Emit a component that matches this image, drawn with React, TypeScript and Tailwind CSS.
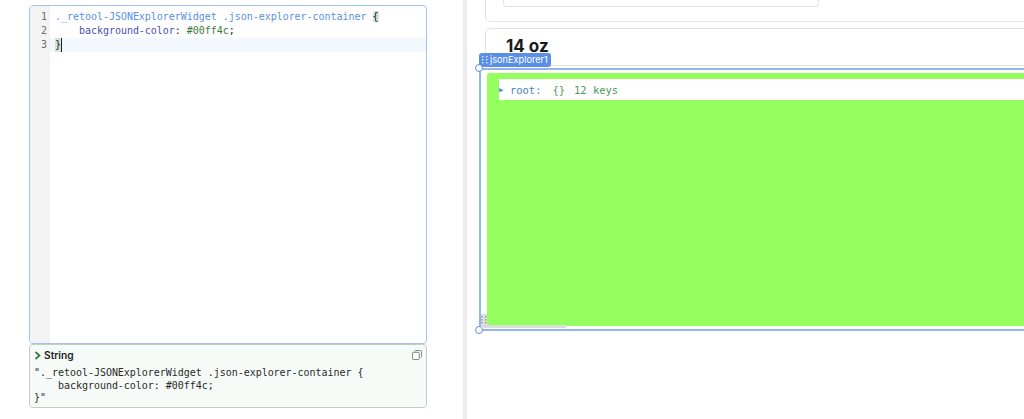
import React from "react";

const mono = "font-['DejaVu_Sans_Mono','Liberation_Mono',monospace] tracking-[-0.03px]";

function Grip({ className }: { className: string }) {
  return (
    <svg width="6" height="8" viewBox="0 0 6 8" className={className} fill="currentColor">
      {[0, 3, 6].map((y) => (
        <g key={y}>
          <rect x="0" y={y} width="1.4" height="1.4" />
          <rect x="4" y={y} width="1.4" height="1.4" />
        </g>
      ))}
    </svg>
  );
}

function Handle({ className }: { className: string }) {
  return <div className={`absolute w-[8px] h-[8px] rounded-full bg-white border-[1.5px] border-[#5b8fe6] ${className}`} />;
}

export default function App() {
  return (
    <div className="flex w-[1024px] h-[419px] overflow-hidden bg-white font-['Inter','Liberation_Sans',sans-serif]">
      {/* Left: editor column */}
      <div className="w-[463px] shrink-0 pl-[29px] pr-[36px] pt-[5px] flex flex-col">
        <div className={`h-[339px] flex rounded-[4px] border border-[#a3c4f3] overflow-hidden ${mono} text-[10px] leading-[14px]`}>
          <div className="w-[20px] bg-[#f3f3f3] text-[#6f6f6f] text-right pr-[3px] pt-[4px] flex flex-col">
            <span>1</span>
            <span>2</span>
            <span>3</span>
          </div>
          <div className="flex-1 pt-[4px] text-[#1d1d1d]">
            <div className="pl-[5px] whitespace-pre">
              <span className="text-[#5b8fe6]">._retool-JSONExplorerWidget .json-explorer-container </span>
              <span className="bg-[#d5e3dc]">{"{"}</span>
            </div>
            <div className="pl-[5px] whitespace-pre">
              <span className="text-[#4a4fb0]">    background-color</span>
              <span>: </span>
              <span className="text-[#3f7a45]">#00ff4c</span>
              <span>;</span>
            </div>
            <div className="pl-[5px] bg-[#f2f8fe] whitespace-pre flex">
              <span className="bg-[#d5e3dc]">{"}"}</span>
              <span className="w-px h-[14px] bg-[#222]" />
            </div>
          </div>
        </div>
        <div className="h-[64px] rounded-[4px] border border-[#c9c9c9] bg-[#f6fbf7] px-[4px] pt-[3px] relative">
          <div className="flex items-center h-[15px] gap-[3px] text-[10.2px] font-semibold text-[#1d1d1d]">
            <svg width="7" height="9" viewBox="0 0 7 9" fill="none" stroke="#2f7d3c" strokeWidth="1.7">
              <path d="M1.5 1 L5.5 4.5 L1.5 8" />
            </svg>
            <span>String</span>
          </div>
          <svg width="10" height="10" viewBox="0 0 11 11" fill="none" stroke="#6b6b6b" strokeWidth="0.9" className="absolute right-[4px] top-[5px]">
            <rect x="0.5" y="2.5" width="7.5" height="8" rx="1" />
            <path d="M3 1.5 Q3 0.5 4 0.5 H9.5 Q10.5 0.5 10.5 1.5 V7 Q10.5 8 9.5 8" />
          </svg>
          <div className={`mt-[4px] whitespace-pre text-[10px] leading-[12.5px] text-[#2a2a2a] ${mono}`}>
            {'"._retool-JSONExplorerWidget .json-explorer-container {\n    background-color: #00ff4c;\n}"'}
          </div>
        </div>
      </div>

      {/* Right: canvas column */}
      <div className="flex-1 min-w-0 border-l-[4px] border-[#ececec] pl-[18px] relative">
        <div className="w-[700px] h-[23px] -mt-px rounded-b-[5px] border border-t-0 border-[#e3e3e3] pl-[17px]">
          <div className="w-[316px] h-[8px] rounded-b-[4px] border border-t-0 border-[#e3e3e3]" />
        </div>
        <div className="w-[700px] h-[38px] mt-[6px] rounded-t-[5px] border border-[#e3e3e3] pl-[20px] pt-[7px]">
          <div className="text-[17px] leading-[20px] font-bold text-[#1a1a1a]">14 oz</div>
        </div>
        {/* Selected component frame */}
        <div className="relative mt-[2px] -ml-[6px] w-[700px] h-[263px] border-y-2 border-l-2 border-[#8fb4f0] pl-[6px] pt-[3px]">
          <div className="absolute -left-[2px] -top-[17px] h-[14px] w-[72px] rounded-[3px] bg-[#5b8fe6] text-white text-[9.2px] leading-[14px] flex items-center gap-[2px] pl-[3px]">
            <Grip className="text-white/80" />
            <span>jsonExplorer1</span>
          </div>
          <Handle className="-left-[6px] -top-[6px]" />
          <Handle className="-left-[6px] -bottom-[5px]" />
          <div className="h-[253px] rounded-l-[3px] bg-[#94ff5f] pl-[12px] pt-[6px]">
            <div className={`h-[21px] pt-[2px] bg-white flex items-center whitespace-pre text-[10.5px] ${mono}`}>
              <span className="text-[#3f8fd6] text-[7px] w-[11px]">▶</span>
              <span className="text-[#4a80b5]">root:</span>
              <span className="text-[#4c9a5a] ml-[11px]">{"{}"}</span>
              <span className="text-[#4c9a5a] ml-[9px]">12 keys</span>
            </div>
          </div>
          <div className="absolute left-0 bottom-[4px] w-[6px] h-[11px] bg-[#dcdcdc] flex items-center justify-center">
            <Grip className="text-[#999]" />
          </div>
          <div className="absolute left-0 bottom-[1px] w-[85px] h-[3px] bg-[#dcdcdc]" />
        </div>
      </div>
    </div>
  );
}
